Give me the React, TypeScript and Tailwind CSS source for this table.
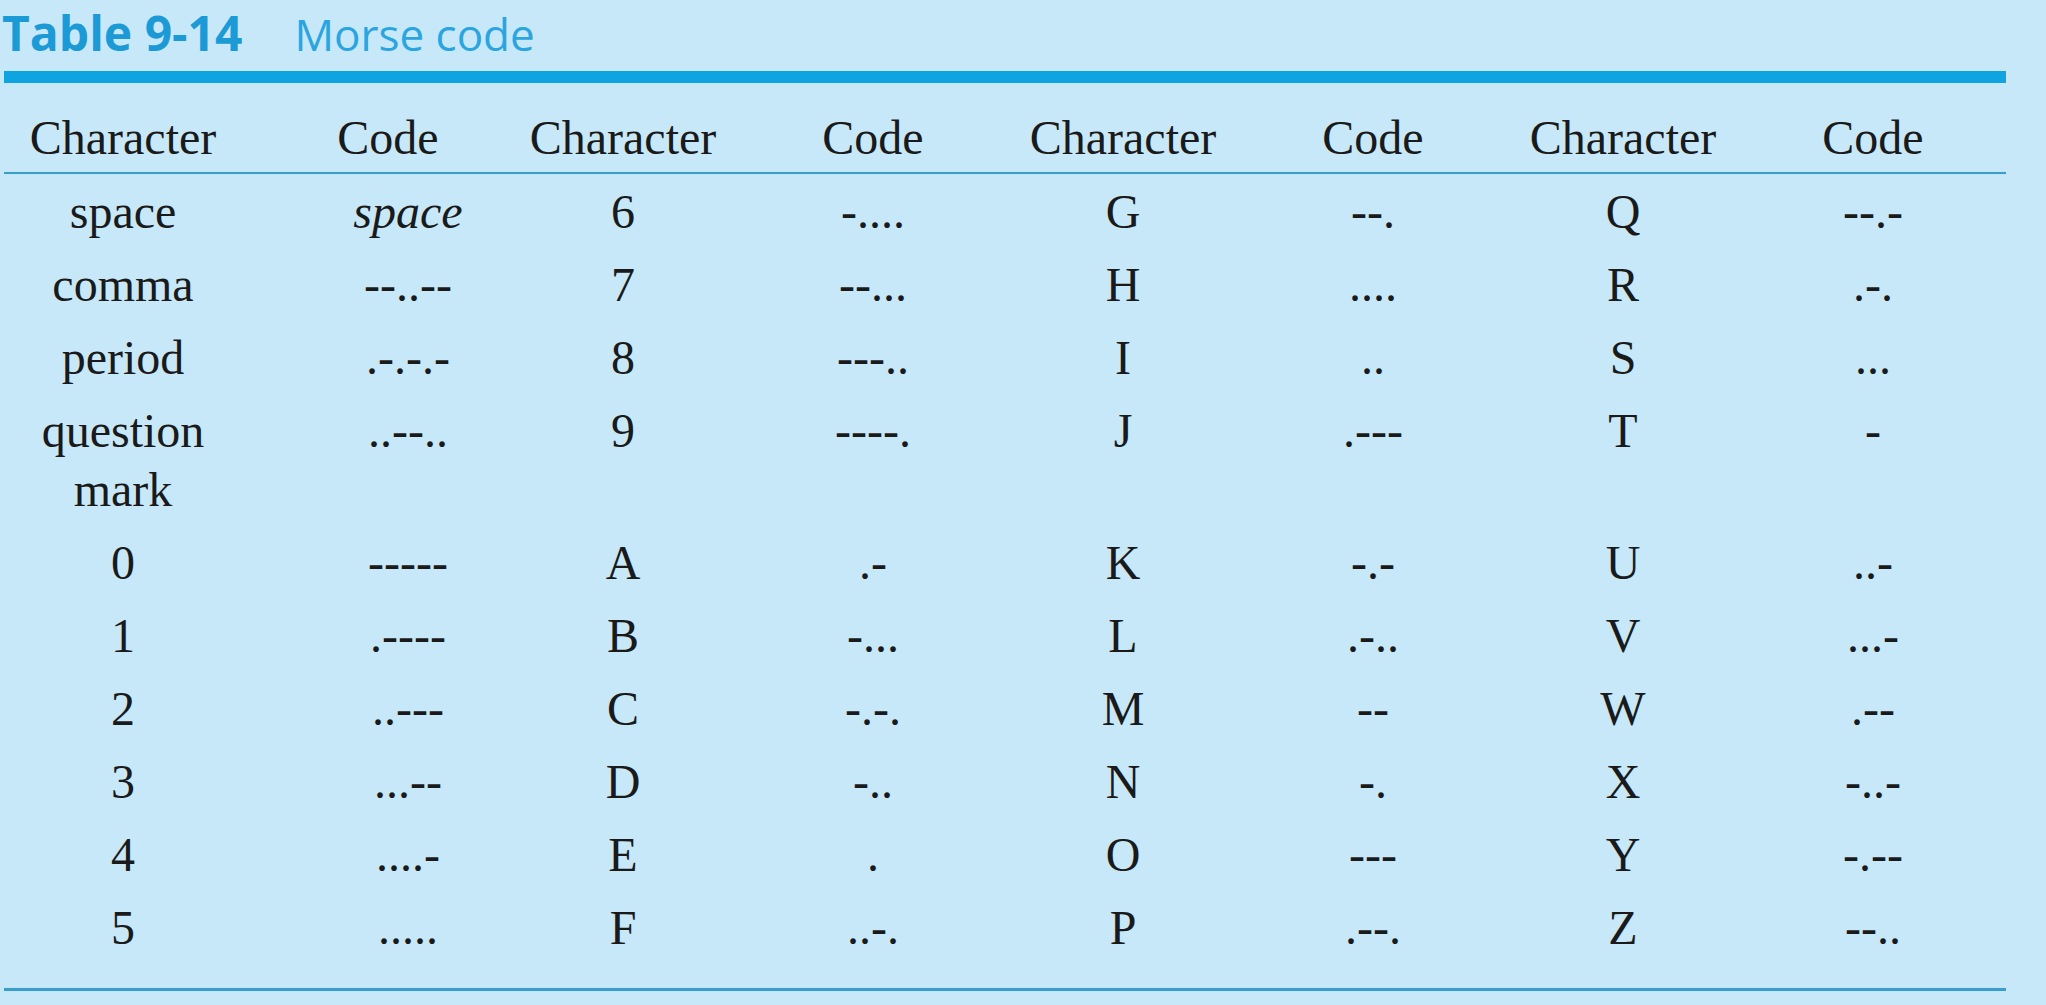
import React from "react";

type Row = [string, string, string, string, string, string, string, string];

const rows: Row[] = [
  ["space", "space", "6", "-....", "G", "--.", "Q", "--.-"],
  ["comma", "--..--", "7", "--...", "H", "....", "R", ".-."],
  ["period", ".-.-.-", "8", "---..", "I", "..", "S", "..."],
  ["question mark", "..--..", "9", "----.", "J", ".---", "T", "-"],
  ["0", "-----", "A", ".-", "K", "-.-", "U", "..-"],
  ["1", ".----", "B", "-...", "L", ".-..", "V", "...-"],
  ["2", "..---", "C", "-.-.", "M", "--", "W", ".--"],
  ["3", "...--", "D", "-..", "N", "-.", "X", "-..-"],
  ["4", "....-", "E", ".", "O", "---", "Y", "-.--"],
  ["5", ".....", "F", "..-.", "P", ".--.", "Z", "--.."],
];

const headers = [
  "Character",
  "Code",
  "Character",
  "Code",
  "Character",
  "Code",
  "Character",
  "Code",
];

const gridCols =
  "grid grid-cols-[246px_254px_246px_254px_246px_254px_246px_254px]";

export default function App() {
  return (
    <div className="w-full h-[1005px] bg-[#c7e8f8] overflow-hidden">
      <div className="w-[2006px]">
        {/* Caption */}
        <div className="flex items-baseline pt-[3px] pl-[2px] leading-[60px] font-['Open_Sans',sans-serif]">
          <span className="text-[48px] font-bold text-[#1c9ad6]">
            Table 9-14
          </span>
          <span className="ml-[52px] text-[44px] text-[#2ba5df]">
            Morse code
          </span>
        </div>
        <div className="ml-[4px] mt-[7px] h-[12px] bg-[#0ea4df]" />

        <div className="font-['Liberation_Serif',serif] text-[48px] leading-[59px] text-[#1a1a1a]">
          {/* Header */}
          <div className={`${gridCols} pt-[25px] pb-[5px]`}>
            {headers.map((h, i) => (
              <div
                key={i}
                className={`text-center whitespace-nowrap ${
                  i === 1 ? "pl-[30px]" : ""
                }`}
              >
                {h}
              </div>
            ))}
          </div>
          <div className="ml-[4px] h-[2px] bg-[#3b9dca] shadow-[0_0_1px_#8fdcf5]" />

          {/* Body */}
          <div className="pt-[1px]">
            {rows.map((row, r) => (
              <div key={r} className={`${gridCols} items-start`}>
                {row.map((cell, c) => (
                  <div
                    key={c}
                    className={`py-[7px] text-center ${
                      c === 1 ? "pl-[70px]" : ""
                    } ${r === 0 && c === 1 ? "italic" : ""} ${
                      c === 0 ? "px-[30px]" : ""
                    }`}
                  >
                    {cell}
                  </div>
                ))}
              </div>
            ))}
          </div>

          <div className="ml-[4px] mt-[24px] h-[3px] bg-[#3b9dca] shadow-[0_0_1px_#8fdcf5]" />
        </div>
      </div>
    </div>
  );
}
